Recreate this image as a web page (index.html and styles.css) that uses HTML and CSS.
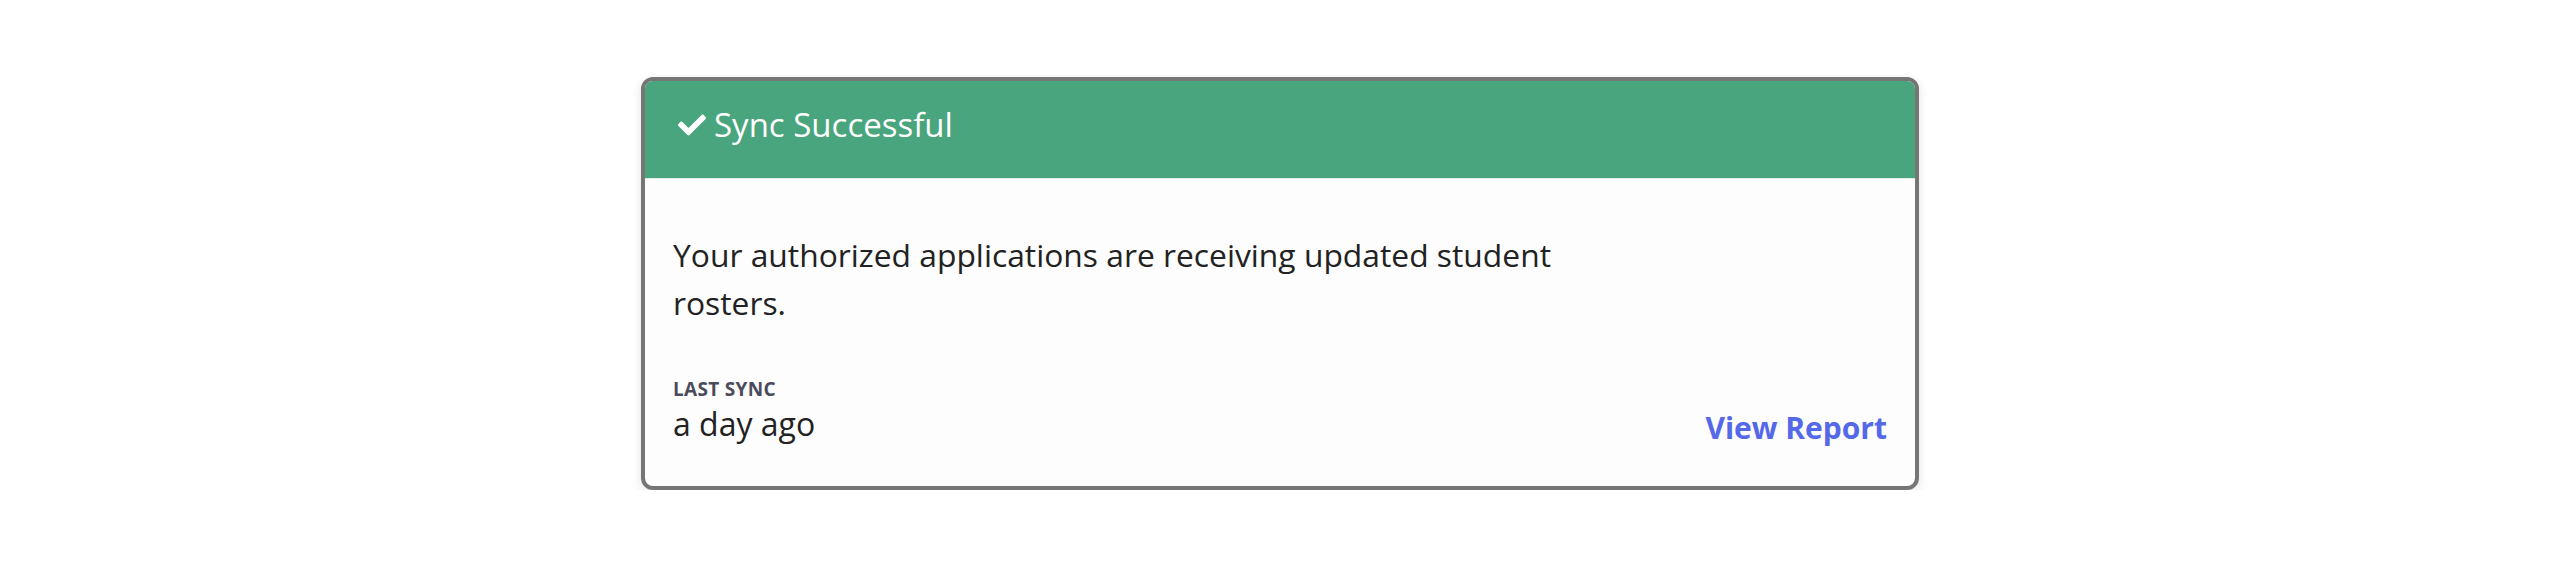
FILE: index.html
```html
<!DOCTYPE html>
<html lang="en">
<head>
    <meta charset="UTF-8">
    <meta name="viewport" content="width=device-width, initial-scale=1.0">
    <title>Sync Status</title>
    <link rel="stylesheet" href="styles.css">
</head>
<body>
    <div class="sync-card">
        <div class="sync-header">
            <svg class="check-icon" xmlns="http://www.w3.org/2000/svg" viewBox="0 0 512 512" width="28" height="28">
                <path fill="currentColor" d="M173.9 439.4l-166.4-166.4c-10-10-10-26.2 0-36.2l36.2-36.2c10-10 26.2-10 36.2 0L192 312.7 432.1 72.6c10-10 26.2-10 36.2 0l36.2 36.2c10 10 10 26.2 0 36.2L210.1 439.4c-10 10-26.2 10-36.2 0z"/>
            </svg>
            <span>Sync Successful</span>
        </div>
        <div class="sync-body">
            <p class="sync-message">Your authorized applications are receiving updated student rosters.</p>
            <div class="sync-footer">
                <div class="last-sync">
                    <div class="last-sync-label">LAST SYNC</div>
                    <div class="last-sync-value">a day ago</div>
                </div>
                <a class="view-report" href="#">View Report</a>
            </div>
        </div>
    </div>
</body>
</html>
```

FILE: styles.css
```css
body {
    font-family: "Open Sans", Lato, sans-serif;
    margin: 0;
    padding: 77px 0 0;
    background-color: #fff;
    display: flex;
    justify-content: center;
}

.sync-card {
    width: 1278px;
    box-sizing: border-box;
    border: 4px solid #767676;
    border-radius: 12px;
    overflow: hidden;
    background-color: #fdfdfd;
    box-shadow: 0 3px 10px rgba(0, 0, 0, 0.12);
}

.sync-header {
    display: flex;
    align-items: center;
    gap: 8px;
    height: 98px;
    box-sizing: border-box;
    padding: 0 33px 10px;
    background-color: #49a57d;
    color: #fff;
    font-size: 33px;
    border-bottom: 1px solid #e3eee8;
}

.check-icon {
    color: #fff;
}

.sync-body {
    padding: 52px 28px 42px;
}

.sync-message {
    margin: 0 0 50px;
    max-width: 910px;
    font-size: 31.8px;
    line-height: 48px;
    color: #222;
}

.sync-footer {
    display: flex;
    justify-content: space-between;
    align-items: flex-end;
}

.last-sync-label {
    font-size: 19px;
    font-weight: 700;
    letter-spacing: 0.3px;
    color: #4b4b5c;
    line-height: 24px;
    margin-bottom: 3px;
}

.last-sync-value {
    font-size: 32px;
    line-height: 40px;
    color: #222;
}

.view-report {
    font-size: 30px;
    font-weight: 700;
    color: #5468e8;
    text-decoration: none;
    line-height: 32px;
}
```
